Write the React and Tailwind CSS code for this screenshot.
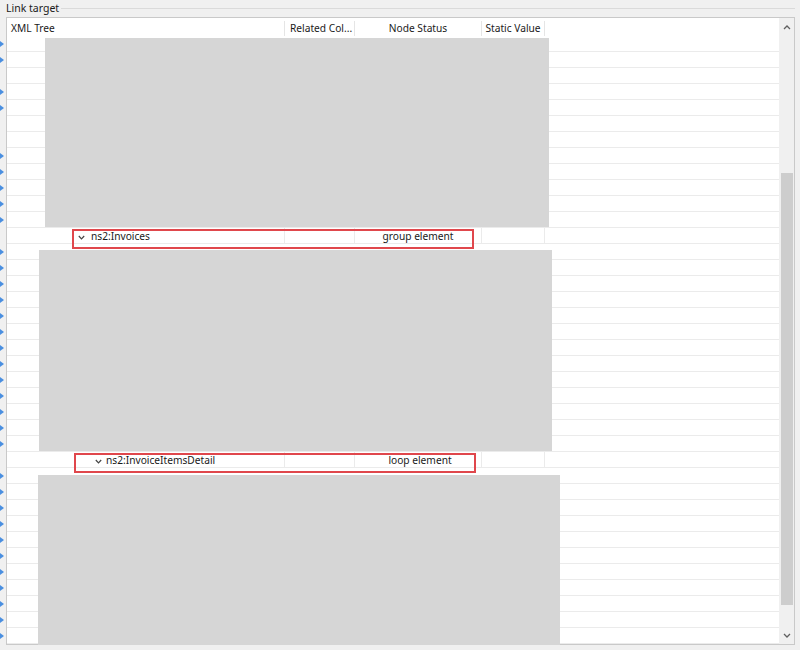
import React from "react";

const ROWS = 38;
const NO_ARROW = new Set([2, 5, 6, 12, 26]);

function Chevron() {
  return (
    <svg width="7" height="5" viewBox="0 0 7 5">
      <polyline points="0.8,1 3.5,3.8 6.2,1" fill="none" stroke="#444" strokeWidth="1.2" />
    </svg>
  );
}

function Arrow() {
  return (
    <svg width="4" height="6" viewBox="0 0 4 6">
      <polygon points="0,0 4,3 0,6" fill="#4a8fe0" />
    </svg>
  );
}

function Row({ i }) {
  if (i === 12) {
    return (
      <div className="flex h-[16px] border-b border-[#ebebeb] text-[10.2px] text-[#1a1a1a]">
        <div className="w-[277px] flex items-center pl-[71px] pt-[3px]">
          <Chevron />
          <span className="ml-[6px]">ns2:Invoices</span>
        </div>
        <div className="w-[70px] border-l border-[#ebebeb]" />
        <div className="w-[127px] border-l border-[#ebebeb] flex items-center justify-center pt-[3px]">group element</div>
        <div className="w-[64px] border-l border-[#ebebeb] border-r" />
      </div>
    );
  }
  if (i === 26) {
    return (
      <div className="flex h-[16px] border-b border-[#ebebeb] text-[10.2px] text-[#1a1a1a]">
        <div className="w-[277px] flex items-center pl-[88px] pt-[3px]">
          <Chevron />
          <span className="ml-[4px]">ns2:InvoiceItemsDetail</span>
        </div>
        <div className="w-[70px] border-l border-[#ebebeb]" />
        <div className="w-[127px] border-l border-[#ebebeb] flex items-center justify-center pt-[3px] pl-[4px]">loop element</div>
        <div className="w-[64px] border-l border-[#ebebeb] border-r" />
      </div>
    );
  }
  return <div className="h-[16px] border-b border-[#ebebeb]" />;
}

export default function App() {
  return (
    <div
      className="relative w-[800px] h-[650px] bg-[#f0f0f0] overflow-hidden"
      style={{ fontFamily: '"Noto Sans", "Open Sans", sans-serif' }}
    >
      <div className="flex items-center h-[16px] pl-[6px] pr-[5px]">
        <span className="text-[10.5px] text-[#1a1a1a] leading-none">Link target</span>
        <div className="flex-1 ml-[2px] h-px bg-[#dadada]" />
      </div>
      <div className="flex mt-[1px]">
        <div className="w-[6px] pt-[19px] flex flex-col">
          {Array.from({ length: ROWS }).map((_, i) => (
            <div key={i} className="h-[16px] flex items-center">
              {!NO_ARROW.has(i) && <Arrow />}
            </div>
          ))}
        </div>
        <div className="w-[789px] h-[628px] border border-[#c9c9c9] bg-white flex overflow-hidden">
          <div className="flex-1 flex flex-col">
            <div className="flex h-[18px] text-[10.2px] text-[#1a1a1a] items-center pt-[3px]">
              <div className="w-[277px] pl-[4px]">XML Tree</div>
              <div className="w-[70px] h-full border-l border-[#e5e5e5] flex items-center pl-[5px] whitespace-nowrap">Related Col...</div>
              <div className="w-[127px] h-full border-l border-[#e5e5e5] flex items-center justify-center">Node Status</div>
              <div className="w-[64px] h-full border-l border-r border-[#e5e5e5] flex items-center justify-center whitespace-nowrap">Static Value</div>
            </div>
            {Array.from({ length: ROWS }).map((_, i) => (
              <Row key={i} i={i} />
            ))}
          </div>
          <div className="w-[15px] bg-[#f0f0f0] flex flex-col items-center">
            <div className="h-[18px] flex items-center justify-center">
              <svg width="8" height="5" viewBox="0 0 8 5">
                <polyline points="1,4 4,1 7,4" fill="none" stroke="#606060" strokeWidth="1.3" />
              </svg>
            </div>
            <div className="h-[137px]" />
            <div className="w-[12px] h-[432px] bg-[#cdcdcd]" />
            <div className="flex-1" />
            <div className="h-[18px] flex items-center justify-center">
              <svg width="8" height="5" viewBox="0 0 8 5">
                <polyline points="1,1 4,4 7,1" fill="none" stroke="#606060" strokeWidth="1.3" />
              </svg>
            </div>
          </div>
        </div>
      </div>

      {/* redaction overlays */}
      <div className="absolute left-[45px] top-[38px] w-[504px] h-[189px] bg-[#d6d6d6]" />
      <div className="absolute left-[39px] top-[250px] w-[513px] h-[201px] bg-[#d6d6d6]" />
      <div className="absolute left-[38px] top-[475px] w-[522px] h-[170px] bg-[#d6d6d6]" />

      {/* highlight boxes */}
      <div className="absolute left-[72px] top-[229px] w-[402px] h-[20px] border-2 border-[#e0474c]" />
      <div className="absolute left-[74px] top-[453px] w-[402px] h-[20px] border-2 border-[#e0474c]" />
    </div>
  );
}
